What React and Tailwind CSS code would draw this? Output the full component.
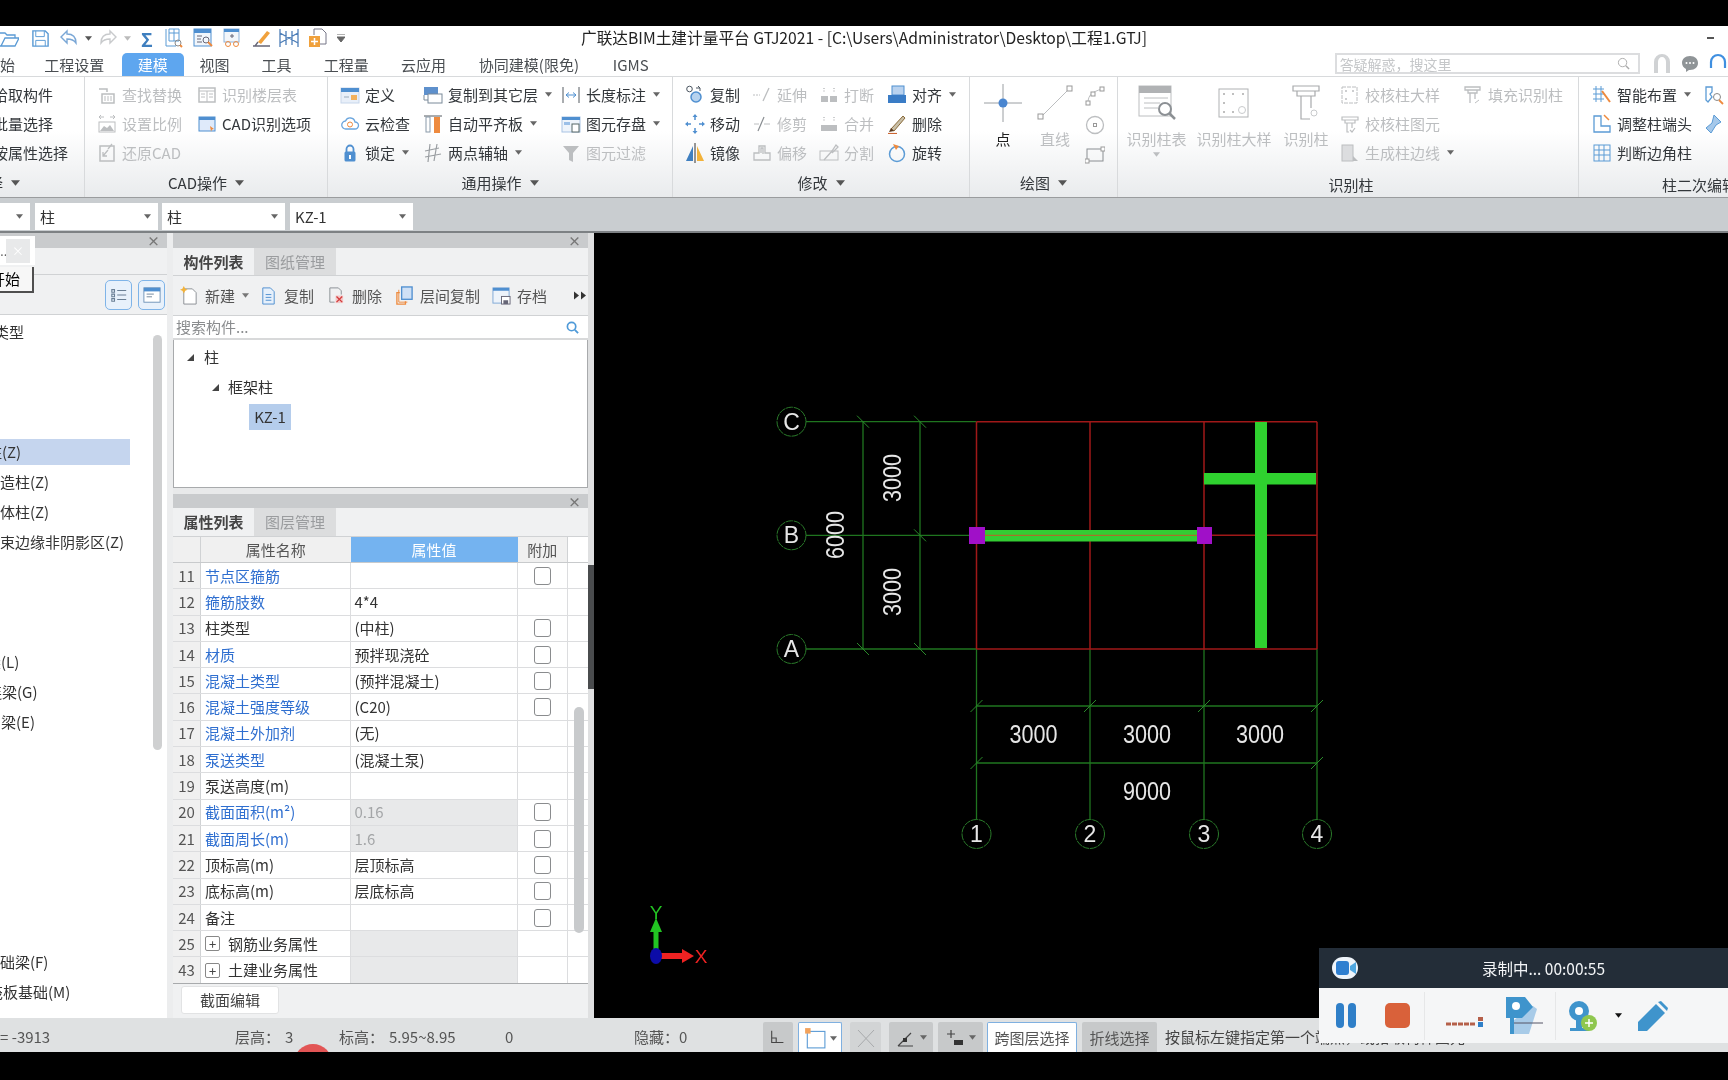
import React from "react";

const B = "#4f8fd0";
const G = "#bcbec0";
const O = "#ee8a3e";
const D = "#555b60";

const Svg = ({ children, className = "w-5 h-5", box = "0 0 20 20" }) => (
  <svg viewBox={box} fill="none" className={`${className} flex-none`}>
    {children}
  </svg>
);

const Caret = ({ color = "#666", className = "ml-[7px]" }) => (
  <svg viewBox="0 0 8 5" className={`w-[7px] h-[5px] flex-none ${className}`}>
    <path d="M0 0h8L4 5z" fill={color} />
  </svg>
);

// ribbon + toolbar icons, all on a 20x20 box
const icons = {
  find: <><path d="M2 4h6M8 4l2 0 0 3M5 9h12v9H5z" stroke={G} strokeWidth="1.5" /><path d="M8 11v5M11 11v5M14 11v5" stroke={G} /></>,
  table: <><rect x="2" y="3" width="16" height="14" stroke={G} strokeWidth="1.5" /><path d="M2 6h16M10 6v11M4 9h4M4 12h4M12 9h4M12 12h4" stroke={G} /></>,
  scale: <><path d="M2 3h5M13 3h5M4 1l-2 2 2 2M16 1l2 2-2 2" stroke={G} /><rect x="2" y="8" width="16" height="10" stroke={G} /><path d="M3 17l4-5 3 2 3-3 4 6z" fill={G} /></>,
  cadopt: <><rect x="2" y="3" width="16" height="14" fill="#dfeafa" stroke={B} /><rect x="2" y="3" width="16" height="3" fill={B} /><path d="M13 12l4 3-2 .5-1 2z" fill={O} /></>,
  restore: <><rect x="3" y="3" width="14" height="15" stroke={G} strokeWidth="1.5" /><path d="M6 13l5-6M6 9v4h4M15 1l-4 5" stroke={G} strokeWidth="1.3" /></>,
  def: <><rect x="1" y="3" width="18" height="15" fill="#e8eff9" stroke="#c7d6ea" /><rect x="1" y="3" width="18" height="4" fill={B} /><rect x="11" y="10" width="6" height="5" fill="#f3b15c" /><path d="M4 12h5" stroke="#9ab" /></>,
  cloud: <><path d="M6 15a4 4 0 0 1-.5-8 5 5 0 0 1 9.500 1 3.500 3.500 0 0 1 0 7z" stroke="#6aa5dd" strokeWidth="1.3" /><circle cx="10" cy="10.5" r="2.5" stroke={O} /></>,
  lock: <><path d="M6.5 9V6a3.5 3.5 0 0 1 7 0v3" stroke={B} strokeWidth="1.8" /><rect x="4.5" y="8.5" width="11" height="10" rx="1.5" fill={B} /><rect x="9" y="12" width="2" height="4" fill="#fff" /></>,
  copyLayer: <><rect x="1" y="2" width="14" height="8" fill="#5e90cc" /><rect x="5" y="9" width="14" height="9" fill="#fff" stroke="#7a8a99" /><path d="M1 10v5h4" stroke="#7a8a99" /></>,
  align: <><path d="M1 2h18" stroke={D} /><rect x="3" y="3" width="4" height="15" stroke="#8a9aa9" /><rect x="11" y="3" width="6" height="16" fill={O} /></>,
  axis: <><path d="M2 14l16-3M2 8l14-3M7 1L5 19M14 1l-3 17" stroke="#9a9ea2" strokeWidth="1.2" /></>,
  dim: <><path d="M2 2v16M18 2v16" stroke={D} /><path d="M5 10h10M5 10l3-2.5M5 10l3 2.5M15 10l-3-2.5M15 10l-3 2.5" stroke={B} /></>,
  store: <><rect x="1" y="3" width="18" height="15" fill="#eef4fb" stroke="#a9c3e3" /><rect x="1" y="3" width="18" height="3" fill={B} /><rect x="3" y="8" width="6" height="3" fill="#9cc0e8" /><rect x="11" y="10" width="7" height="8" fill="#fff" stroke="#566" /></>,
  filter: <path d="M2 3h16l-6 7v9l-4-2v-7z" fill={G} />,
  copy: <><circle cx="4.5" cy="4" r="2.8" stroke="#4a5560" /><circle cx="11" cy="12" r="5" fill="#b6d2ee" stroke={B} strokeWidth="1.5" /><path d="M11 3h4v3M15 3l-2-2" stroke="#4a5560" /></>,
  extend: <><path d="M1 10h7" stroke={G} strokeDasharray="2 1" /><path d="M11 16l6-13" stroke={G} strokeWidth="1.3" /></>,
  move: <><path d="M10 2v4M10 14v4M2 10h4M14 10h4" stroke={B} strokeWidth="1.5" /><path d="M10 0l2.5 3h-5zM10 20l2.5-3h-5zM0 10l3-2.5v5zM20 10l-3-2.5v5z" fill={B} /></>,
  trim: <><path d="M2 10h5M12 10h6" stroke={G} /><path d="M6 17L12 3" stroke="#8a8e92" strokeWidth="1.2" /></>,
  mirror: <><path d="M8 3L1 18h7z" fill="#3f7fc0" /><path d="M12 3l7 15h-7z" fill="#f2b23a" /><path d="M10 0v20" stroke="#333" /></>,
  offset: <path d="M7 10V3h6v7h5v7H2v-7zM9 10V5h2v6" stroke={G} strokeWidth="1.3" />,
  breakk: <><rect x="2" y="11" width="7" height="6" fill={G} /><rect x="11" y="11" width="7" height="6" fill={G} /><path d="M5 3v5M15 3v5" stroke={G} strokeDasharray="1 1.5" strokeWidth="1.5" /></>,
  merge: <><rect x="2" y="11" width="16" height="6" fill={G} /><path d="M5 3v5M15 3v5" stroke={G} strokeDasharray="1 1.5" strokeWidth="1.5" /></>,
  split: <><rect x="1" y="8" width="18" height="9" stroke={G} /><path d="M5 17l8-9 4-6 2 2-6 6" stroke={G} strokeWidth="1.3" /></>,
  alignTo: <><rect x="5" y="1" width="12" height="9" fill="#b9d2ef" stroke={B} /><rect x="1" y="10" width="18" height="8" fill="#3a7cc6" /></>,
  erase: <><path d="M4 15L16 2l2 2L7 17z" fill="#c8bfa8" stroke="#8a6a3a" /><path d="M2 18l2-4 3 3z" fill="#5a3a20" /><path d="M1 19.5h9" stroke="#c63" strokeWidth="1.2" /></>,
  rotate: <><circle cx="10" cy="11" r="7.5" stroke="#5b9bd5" strokeWidth="1.5" /><path d="M6 1l6 2-3 4z" fill={O} /></>,
  checkDetail: <><rect x="2" y="2" width="15" height="16" stroke={G} strokeDasharray="4 1" /><circle cx="6" cy="6" r="1" fill={G} /><circle cx="13" cy="6" r="1" fill={G} /><circle cx="6" cy="14" r="1" fill={G} /></>,
  checkCol: <><path d="M2 3h16v3H2zM5 6v3h10V6M7 9v9h2M12 9v5M15 14l-3 4-2-2" stroke={G} strokeWidth="1.2" /></>,
  edge: <><rect x="2" y="2" width="11" height="16" fill="#dcdddf" stroke={G} /><path d="M13 13l5 5h-5z" fill={G} /></>,
  fill: <><path d="M2 2h15v3H2zM5 5v3h9V5M7 8v10M12 8v6" stroke={G} strokeWidth="1.3" /><path d="M12 18l4-3" stroke={G} /></>,
  smart: <><path d="M1 4h11M1 9h11M1 14h11M4 1v16M9 1v16" stroke="#5b9bd5" /><path d="M10 6l8 11" stroke={O} strokeWidth="2" /></>,
  adjust: <><path d="M2 2h7v10h9v6H2z" stroke="#5b9bd5" strokeWidth="1.3" /><path d="M12 1l5 5" stroke={O} strokeWidth="1.5" /></>,
  corner: <><rect x="2" y="2" width="16" height="16" stroke="#5b9bd5" /><path d="M2 7h16M2 12h16M7 2v16M12 2v16" stroke="#5b9bd5" /></>,
  side1: <><path d="M2 2h6v5l-2 2 2 3-4 5-2-2z" stroke="#5b9bd5" strokeWidth="1.3" /><circle cx="13" cy="12" r="3.5" stroke="#888" /><path d="M15 15l4 4" stroke={O} strokeWidth="1.8" /></>,
  side2: <path d="M10 1l7 7-5 3-5 8-5-5 6-5z" fill="#a5c8ea" stroke="#5b9bd5" />,
  newf: <><path d="M4 3h9l4 4v12H4z" fill="#fff" stroke="#8a8f94" /><path d="M4 0l1.5 3L8 4 5.5 5 4 8 2.5 5 0 4l2.5-1z" fill="#f2b23a" /></>,
  copyf: <><path d="M4 2h8l4 4v13H4z" fill="#e6f0fb" stroke={B} /><path d="M7 9h6M7 12h6M7 15h6" stroke={B} /></>,
  del: <><path d="M3 2h9l3 3v4M3 2v15h5" stroke="#8a8f94" /><rect x="9" y="10" width="8" height="8" fill="#f3c7c7" /><path d="M10 11l6 6M16 11l-6 6" stroke="#d23b3b" strokeWidth="1.4" /></>,
  layer: <><rect x="7" y="1" width="11" height="13" fill="#cfe0f5" stroke={B} strokeWidth="1.4" /><path d="M5 7H2v12h9v-3" stroke={O} strokeWidth="1.4" /><path d="M4 4v13h9" stroke={O} /></>,
  archive: <><rect x="1" y="2" width="17" height="16" fill="#edf3fa" stroke="#7fa8d6" /><rect x="1" y="2" width="17" height="3" fill={B} /><rect x="10" y="11" width="9" height="8" fill="#fff" stroke="#667" /><rect x="12" y="15" width="5" height="4" fill="#667" /></>,
};

const Icon = ({ n, className }) => <Svg className={className}>{icons[n]}</Svg>;

const Btn = ({ icon, text, off, caret }) => (
  <div className="h-[29px] flex items-center">
    <Icon n={icon} />
    <span className={`ml-[5px] whitespace-nowrap ${off ? "text-[#bcbec0]" : "text-[#33373b]"}`}>{text}</span>
    {caret && <Caret />}
  </div>
);

const Group = ({ className, label, caret, children, labelClass = "" }) => (
  <div className={`flex-none flex flex-col border-r border-[#d8dadc] ${className}`}>
    <div className="h-[91px] pt-[3px] flex">{children}</div>
    <div className={`flex-1 flex items-center justify-center whitespace-nowrap text-[#33373b] ${labelClass}`}>
      {label}
      {caret && <Caret color="#555" className="ml-[8px] w-[9px] h-[6px]" />}
    </div>
  </div>
);

const Big = ({ className, text, off, caret, children }) => (
  <div className={`flex-none flex flex-col items-center ${className}`}>
    <div className="h-[49px] pb-[3px] w-full flex items-center justify-center">{children}</div>
    <span className={`whitespace-nowrap ${off ? "text-[#bcbec0]" : "text-[#222]"}`}>{text}</span>
    {caret && <Caret color="#bcbec0" className="mt-[3px]" />}
  </div>
);

const QuickAccess = () => (
  <div className="flex items-center h-full">
    <Svg className="w-5 h-5 -ml-[1px]"><path d="M0 5h6l2 2h8v3H6l-4 8H0zM2 18l4-8h14l-4 8z" stroke="#5b9bd5" strokeWidth="1.3" /></Svg>
    <Svg className="w-[19px] h-[19px] ml-[12px]"><path d="M2 2h13l3 3v13H2z" stroke="#5b9bd5" strokeWidth="1.5" /><path d="M5 2v6h9V2M5 18v-6h10v6" stroke="#5b9bd5" /></Svg>
    <Svg className="w-5 h-5 ml-[9px]"><path d="M8 3L2 9l6 6v-4c5 0 7 1 9 4 0-6-3-9-9-9z" stroke="#7aa7d6" strokeWidth="1.4" /></Svg>
    <Caret color="#555" className="ml-[6px]" />
    <Svg className="w-5 h-5 ml-[6px]"><path d="M12 3l6 6-6 6v-4c-5 0-7 1-9 4 0-6 3-9 9-9z" stroke="#c8cacc" strokeWidth="1.4" /></Svg>
    <Caret color="#bbb" className="ml-[6px]" />
    <span className="ml-[10px] w-[14px] text-[#3f7fbf] text-[19px] leading-none font-bold">Σ</span>
    <Svg className="w-5 h-5 ml-[8px]"><path d="M3 1v17h10M6 1h10v12H6zM6 5h10M11 1v12" stroke="#5b9bd5" /><circle cx="15" cy="15" r="3" stroke="#888" /><path d="M17 17l2 2" stroke={O} strokeWidth="2" /></Svg>
    <Svg className="w-5 h-5 ml-[10px]"><rect x="1" y="1" width="17" height="17" fill="#f1f6fc" stroke={B} /><rect x="1" y="1" width="17" height="4" fill={B} /><path d="M4 8h5M4 11h4M4 14h5" stroke="#667" /><circle cx="13" cy="12" r="3" stroke="#667" /><path d="M15 14l4 4" stroke={O} strokeWidth="2" /></Svg>
    <Svg className="w-5 h-5 ml-[9px]"><rect x="2" y="1" width="15" height="13" fill="#f3f6fa" stroke="#8fb3da" /><rect x="2" y="1" width="15" height="3" fill={B} /><path d="M8 8h4M10 6v4" stroke="#667" /><circle cx="6" cy="16" r="2.5" stroke={O} /><circle cx="14" cy="16" r="2.5" stroke={O} /></Svg>
    <Svg className="w-5 h-5 ml-[10px]"><path d="M6 14L15 3l3 2-9 11z" fill="#f0a13c" /><path d="M1 18h17M3 18l3-4" stroke="#667" strokeWidth="1.3" /></Svg>
    <Svg className="w-[22px] h-5 ml-[6px]" box="0 0 22 20"><path d="M2 1v18M20 1v18M2 5l9 5 9-5M2 15l9-5 9 5M8 3v14M14 3v14" stroke="#4f7fb8" strokeWidth="1.3" /></Svg>
    <Svg className="w-5 h-5 ml-[8px]"><path d="M6 1h8l4 4v11h-6M6 1v6" stroke="#778" /><rect x="1" y="8" width="11" height="11" fill="#f0a13c" /><path d="M6.5 10v7M3 13.5h7" stroke="#fff" strokeWidth="1.5" /></Svg>
    <svg viewBox="0 0 8 8" className="w-2 h-2 ml-[9px]"><path d="M0 0h8M0 3h8L4 8z" stroke="#666" fill="#666" /></svg>
  </div>
);

const TitleBar = () => (
  <div className="h-[27px] flex-none pb-[3px] bg-white grid grid-cols-[1fr_auto_1fr] items-center">
    <QuickAccess />
    <span className="text-[#222] text-[15.7px] whitespace-nowrap">广联达BIM土建计量平台 GTJ2021 - [C:\Users\Administrator\Desktop\工程1.GTJ]</span>
    <div className="flex justify-end pr-[14px]">
      <div className="w-[7px] h-[2px] bg-[#555]" />
    </div>
  </div>
);

const tabs = [
  { t: "始", c: "w-[27px] !justify-start" },
  { t: "工程设置", c: "w-[95px]" },
  { t: "建模", c: "w-[62px] bg-[#5ea6ef] text-white rounded-t-[5px]" },
  { t: "视图", c: "w-[62px]" },
  { t: "工具", c: "w-[62px]" },
  { t: "工程量", c: "w-[78px]" },
  { t: "云应用", c: "w-[77px]" },
  { t: "协同建模(限免)", c: "w-[134px]" },
  { t: "IGMS", c: "w-[70px]" },
];

const TabRow = () => (
  <div className="h-[24px] flex-none bg-white flex border-b border-[#d8dadc] text-[#4a4e52]">
    {tabs.map((t) => (
      <div key={t.t} className={`flex items-center justify-center whitespace-nowrap ${t.c}`}>{t.t}</div>
    ))}
    <div className="ml-[669px] w-[306px] h-[21px] border-2 border-[#dcdddf] flex items-center px-[3px] text-[#c5c7c9] text-[14px]">
      答疑解惑，搜这里
      <svg viewBox="0 0 14 14" className="w-[13px] h-[13px] ml-auto mr-[5px]"><circle cx="6" cy="6" r="4.5" stroke="#aaa" fill="none" /><path d="M9.5 9.5L13 13" stroke="#aaa" strokeWidth="1.5" /></svg>
    </div>
    <Svg className="w-5 h-5 ml-[12px]"><path d="M2 20V9a8 8 0 0 1 16 0v11h-4V9a4 5 0 0 0-8 0v11z" fill="#d0d2d4" /></Svg>
    <Svg className="w-5 h-5 ml-[8px]"><path d="M10 3c5 0 8 3 8 7s-3 7-8 7l-1 0-3 2v-3c-2-1-4-3-4-6 0-4 3-7 8-7z" fill="#8f9497" /><circle cx="6.5" cy="10" r="1" fill="#fff" /><circle cx="10" cy="10" r="1" fill="#fff" /><circle cx="13.5" cy="10" r="1" fill="#fff" /></Svg>
    <Svg className="w-5 h-5 ml-[8px]"><path d="M3 12V9a7 7 0 0 1 14 0v3M3 10v5M17 10v5" stroke="#3f8fe0" strokeWidth="2.2" /></Svg>
  </div>
);

const Ribbon = () => (
  <div className="h-[121px] flex-none flex overflow-hidden bg-gradient-to-b from-white from-45% to-[#e9ebed] border-b border-[#9a9c9e]">
    <Group className="w-[85px]" label="择" caret labelClass="!justify-start -ml-[12px]">
      <div className="flex flex-col -ml-[7px] text-[#33373b]">
        <div className="h-[29px] flex items-center whitespace-nowrap">拾取构件</div>
        <div className="h-[29px] flex items-center whitespace-nowrap">批量选择</div>
        <div className="h-[29px] flex items-center whitespace-nowrap">按属性选择</div>
      </div>
    </Group>
    <Group className="w-[243px]" label="CAD操作" caret>
      <div className="flex flex-col w-[100px] ml-[12px]">
        <Btn icon="find" text="查找替换" off />
        <Btn icon="scale" text="设置比例" off />
        <Btn icon="restore" text="还原CAD" off />
      </div>
      <div className="flex flex-col">
        <Btn icon="table" text="识别楼层表" off />
        <Btn icon="cadopt" text="CAD识别选项" />
      </div>
    </Group>
    <Group className="w-[345px]" label="通用操作" caret>
      <div className="flex flex-col w-[83px] ml-[12px]">
        <Btn icon="def" text="定义" />
        <Btn icon="cloud" text="云检查" />
        <Btn icon="lock" text="锁定" caret />
      </div>
      <div className="flex flex-col w-[138px]">
        <Btn icon="copyLayer" text="复制到其它层" caret />
        <Btn icon="align" text="自动平齐板" caret />
        <Btn icon="axis" text="两点辅轴" caret />
      </div>
      <div className="flex flex-col">
        <Btn icon="dim" text="长度标注" caret />
        <Btn icon="store" text="图元存盘" caret />
        <Btn icon="filter" text="图元过滤" off />
      </div>
    </Group>
    <Group className="w-[297px]" label="修改" caret>
      <div className="flex flex-col w-[67px] ml-[12px]">
        <Btn icon="copy" text="复制" />
        <Btn icon="move" text="移动" />
        <Btn icon="mirror" text="镜像" />
      </div>
      <div className="flex flex-col w-[67px]">
        <Btn icon="extend" text="延伸" off />
        <Btn icon="trim" text="修剪" off />
        <Btn icon="offset" text="偏移" off />
      </div>
      <div className="flex flex-col w-[68px]">
        <Btn icon="breakk" text="打断" off />
        <Btn icon="merge" text="合并" off />
        <Btn icon="split" text="分割" off />
      </div>
      <div className="flex flex-col">
        <Btn icon="alignTo" text="对齐" caret />
        <Btn icon="erase" text="删除" />
        <Btn icon="rotate" text="旋转" />
      </div>
    </Group>
    <Group className="w-[148px]" label="绘图" caret>
      <Big className="w-[66px]" text="点">
        <Svg className="w-[38px] h-[38px]" box="0 0 38 38">
          <path d="M0 19h38M19 0v38" stroke="#9a9ea2" />
          <circle cx="19" cy="19" r="4.5" fill="#4a86d0" />
        </Svg>
      </Big>
      <Big className="w-[38px]" text="直线" off>
        <Svg className="w-[36px] h-[36px]" box="0 0 36 36">
          <path d="M4 32L32 4" stroke="#bcbec0" />
          <rect x="1" y="29" width="5" height="5" fill="#fff" stroke="#999" />
          <rect x="30" y="1" width="5" height="5" fill="#fff" stroke="#999" />
        </Svg>
      </Big>
      <div className="flex flex-col items-center gap-[9px] pt-[6px] ml-[11px]">
        <Svg><path d="M3 17C3 9 7 6 17 3" stroke={G} /><rect x="1" y="15" width="4" height="4" fill="#fff" stroke="#999" /><rect x="6" y="6" width="4" height="4" fill="#fff" stroke="#999" /><rect x="15" y="1" width="4" height="4" fill="#fff" stroke="#999" /></Svg>
        <Svg><circle cx="10" cy="10" r="8.5" stroke={G} strokeWidth="1.3" /><rect x="8.5" y="8.5" width="3" height="3" stroke="#999" /></Svg>
        <Svg><rect x="2" y="5" width="16" height="12" stroke="#8a8e92" /><rect x="0" y="15" width="4" height="4" fill="#fff" stroke="#999" /><rect x="16" y="3" width="4" height="4" fill="#fff" stroke="#999" /></Svg>
      </div>
    </Group>
    <Group className="w-[461px]" label="识别柱" labelClass="pt-[5px] pl-[6px]">
      <Big className="w-[77px]" text="识别柱表" off caret>
        <Svg className="w-[38px] h-[36px]" box="0 0 38 36">
          <rect x="1" y="1" width="32" height="30" fill="#fff" stroke="#bcbec0" />
          <rect x="1" y="1" width="32" height="7" fill="#b0b2b4" />
          <path d="M6 13h24M6 18h16M6 23h14" stroke="#bcbec0" />
          <circle cx="27" cy="24" r="6" stroke="#8c9094" strokeWidth="2" />
          <path d="M31 28l6 6" stroke="#8c9094" strokeWidth="2.5" />
        </Svg>
      </Big>
      <Big className="w-[78px]" text="识别柱大样" off>
        <Svg className="w-[32px] h-[30px]" box="0 0 32 30">
          <rect x="1" y="1" width="29" height="28" stroke="#b0b2b4" />
          <circle cx="6" cy="6" r="1" fill="#aaa" /><circle cx="15" cy="6" r="1" fill="#aaa" /><circle cx="25" cy="6" r="1" fill="#aaa" /><circle cx="6" cy="15" r="1" fill="#aaa" /><circle cx="6" cy="24" r="1" fill="#aaa" /><circle cx="15" cy="24" r="1" fill="#aaa" />
          <circle cx="24" cy="22" r="3.5" stroke="#c8cacc" />
        </Svg>
      </Big>
      <Big className="w-[66px]" text="识别柱" off>
        <Svg className="w-[30px] h-[36px]" box="0 0 30 36">
          <path d="M2 1h26v5H2zM6 6v5h18V6M10 11v23h9M20 11v12" stroke="#a8aaac" strokeWidth="1.2" />
          <circle cx="23" cy="28" r="3" stroke="#c8cacc" />
        </Svg>
      </Big>
      <div className="flex flex-col w-[123px] ml-[1px]">
        <Btn icon="checkDetail" text="校核柱大样" off />
        <Btn icon="checkCol" text="校核柱图元" off />
        <Btn icon="edge" text="生成柱边线" off caret />
      </div>
      <div className="flex flex-col">
        <Btn icon="fill" text="填充识别柱" off />
      </div>
    </Group>
    <Group className="flex-1 !border-r-0" label="柱二次编辑" labelClass="pt-[5px] !justify-start pl-[83px]">
      <div className="flex flex-col w-[112px] ml-[13px]">
        <Btn icon="smart" text="智能布置" caret />
        <Btn icon="adjust" text="调整柱端头" />
        <Btn icon="corner" text="判断边角柱" />
      </div>
      <div className="flex flex-col">
        <div className="h-[29px] flex items-center"><Icon n="side1" /></div>
        <div className="h-[29px] flex items-center"><Icon n="side2" /></div>
      </div>
    </Group>
  </div>
);

const Combo = ({ text, className }) => (
  <div className={`h-[27px] bg-white flex items-center justify-between pl-[5px] pr-[7px] text-[#333] ${className}`}>
    <span>{text}</span>
    <Caret color="#666" className="" />
  </div>
);

const ComboRow = () => (
  <div className="h-[35px] flex-none pt-[5px] bg-[#c9cdd0] flex items-start border-b-2 border-[#7d8184]">
    <Combo text="" className="w-[30px]" />
    <Combo text="柱" className="w-[123px] ml-[5px]" />
    <Combo text="柱" className="w-[123px] ml-[4px]" />
    <Combo text="KZ-1" className="w-[123px] ml-[5px]" />
  </div>
);

const PanelHeader = ({ className = "h-[15px]" }) => (
  <div className={`flex-none bg-[#c9cbcd] flex items-center justify-end pr-[7px] text-[#777] text-[13px] font-bold leading-none ${className}`}>×</div>
);

const PanelTabs = ({ a, b, className = "h-[28px]" }) => (
  <div className={`flex-none flex border-b border-[#d0d2d4] bg-[#f0f1f2] ${className}`}>
    <div className="w-[81px] flex items-center justify-center font-bold text-[#444]">{a}</div>
    <div className="w-[82px] flex items-center justify-center bg-[#dcddde] text-[#9a9c9e]">{b}</div>
  </div>
);

const leftRows = [
  { t: "类型", c: "-ml-[6px]" },
  {}, {}, {},
  { t: "柱(Z)", c: "-ml-[13px]", sel: true },
  { t: "造柱(Z)" },
  { t: "体柱(Z)" },
  { t: "束边缘非阴影区(Z)" },
  {}, {}, {},
  { t: "梁(L)", c: "-ml-[14px]" },
  { t: "连梁(G)", c: "-ml-[13px]" },
  { t: "圈梁(E)", c: "-ml-[14px]" },
  {}, {}, {}, {}, {}, {}, {},
  { t: "基础梁(F)", c: "-ml-[15px]" },
  { t: "筏板基础(M)", c: "-ml-[12px]" },
];

const LeftPanel = () => (
  <div className="w-[167px] flex-none flex flex-col relative bg-white">
    <PanelHeader />
    <div className="h-[27px] flex-none bg-[#f0f1f2] border-b border-[#d0d2d4]" />
    <div className="h-[40px] flex-none bg-[#f0f1f2] border-b border-[#d0d2d4] flex items-center justify-end gap-[6px] pr-[2px]">
      <div className="w-[27px] h-[30px] rounded-[5px] border border-[#7fb4e8] bg-[#e8f1fb] flex items-center justify-center">
        <Svg className="w-[18px] h-[18px]"><path d="M2 4h3v3H2zM2 9h3v3H2zM2 14h3v3H2zM8 5h10M8 10h10M8 15h10" stroke="#6a7f95" strokeWidth="1.2" /></Svg>
      </div>
      <div className="w-[27px] h-[30px] rounded-[5px] border border-[#7fb4e8] bg-[#e8f1fb] flex items-center justify-center">
        <Svg className="w-[18px] h-[18px]"><rect x="1" y="2" width="18" height="16" fill="#fff" stroke="#6a8fb5" /><rect x="1" y="2" width="18" height="4" fill="#4f8fd0" /><path d="M4 9h8M4 12h6" stroke="#6a7f95" /></Svg>
      </div>
    </div>
    <div className="flex-1 pt-[2px] overflow-hidden text-[#333]">
      {leftRows.map((r, i) => (
        <div key={i} className="h-[30px] flex items-center">
          <div className={`h-[26px] w-[130px] flex items-center whitespace-nowrap overflow-hidden ${r.sel ? "bg-[#c5d5ee]" : ""}`}>
            <span className={r.c}>{r.t}</span>
          </div>
        </div>
      ))}
    </div>
    <div className="absolute left-[153px] top-[102px] w-[9px] h-[415px] rounded-full bg-[#cfd0d1]" />
    <div className="absolute left-0 top-[3px] w-[35px] h-[29px] bg-white flex items-center text-[#555] leading-none">
      <span className="w-[9px] text-[12px] -ml-[3px]">...</span>
      <div className="w-[24px] h-[24px] bg-[#e8e9ea] flex items-center justify-center text-white text-[12px]">×</div>
    </div>
    <div className="absolute left-0 top-[34px] w-[34px] h-[26px] bg-[#f7f7f7] border-r-2 border-b-2 border-[#4f4f4f] flex items-center text-black whitespace-nowrap overflow-hidden">
      <span className="-ml-[10px]">开始</span>
    </div>
  </div>
);

const ToolItem = ({ icon, text, caret, className }) => (
  <div className={`flex items-center ${className}`}>
    <Icon n={icon} className="w-[19px] h-[19px]" />
    <span className="ml-[6px] text-[#555] whitespace-nowrap">{text}</span>
    {caret && <Caret color="#777" />}
  </div>
);

const TreeArrow = () => (
  <svg viewBox="0 0 7 7" className="w-[7px] h-[7px] flex-none"><path d="M7 0v7H0z" fill="#444" /></svg>
);

const ComponentList = () => (
  <>
    <PanelHeader />
    <PanelTabs a="构件列表" b="图纸管理" />
    <div className="h-[40px] flex-none flex items-center pl-[7px] bg-[#f0f1f2] border-b border-[#d0d2d4]">
      <ToolItem icon="newf" text="新建" caret />
      <ToolItem icon="copyf" text="复制" className="ml-[10px]" />
      <ToolItem icon="del" text="删除" className="ml-[13px]" />
      <ToolItem icon="layer" text="层间复制" className="ml-[13px]" />
      <ToolItem icon="archive" text="存档" className="ml-[12px]" />
      <svg viewBox="0 0 12 8" className="w-[12px] h-[9px] ml-[27px]"><path d="M0 0l5 4-5 4zM7 0l5 4-5 4z" fill="#333" /></svg>
    </div>
    <div className="h-[24px] flex-none bg-white border-b-2 border-[#d8d9da] flex items-center pl-[3px] pr-[9px] text-[#8a8c8e]">
      搜索构件...
      <svg viewBox="0 0 14 14" className="w-[13px] h-[13px] ml-auto"><circle cx="6" cy="6" r="4.5" stroke="#4f9ad8" strokeWidth="1.8" fill="none" /><path d="M9.5 9.5L13 13" stroke="#4f9ad8" strokeWidth="2" /></svg>
    </div>
    <div className="h-[148px] flex-none bg-white border border-t-0 border-[#a8aaac] pt-[2px] text-[#333]">
      <div className="h-[30px] flex items-center pl-[13px]"><TreeArrow /><span className="ml-[10px]">柱</span></div>
      <div className="h-[30px] flex items-center pl-[38px]"><TreeArrow /><span className="ml-[9px]">框架柱</span></div>
      <div className="h-[30px] flex items-center pl-[75px]"><span className="bg-[#b5cdec] w-[42px] h-[26px] flex items-center justify-center">KZ-1</span></div>
    </div>
  </>
);

const props = [
  { i: 11, n: "节点区箍筋", blue: 1, chk: 1 },
  { i: 12, n: "箍筋肢数", blue: 1, v: "4*4" },
  { i: 13, n: "柱类型", v: "(中柱)", chk: 1 },
  { i: 14, n: "材质", blue: 1, v: "预拌现浇砼", chk: 1 },
  { i: 15, n: "混凝土类型", blue: 1, v: "(预拌混凝土)", chk: 1 },
  { i: 16, n: "混凝土强度等级", blue: 1, v: "(C20)", chk: 1 },
  { i: 17, n: "混凝土外加剂", blue: 1, v: "(无)" },
  { i: 18, n: "泵送类型", blue: 1, v: "(混凝土泵)" },
  { i: 19, n: "泵送高度(m)" },
  { i: 20, n: "截面面积(m²)", blue: 1, v: "0.16", off: 1, chk: 1 },
  { i: 21, n: "截面周长(m)", blue: 1, v: "1.6", off: 1, chk: 1 },
  { i: 22, n: "顶标高(m)", v: "层顶标高", chk: 1 },
  { i: 23, n: "底标高(m)", v: "层底标高", chk: 1 },
  { i: 24, n: "备注", chk: 1 },
  { i: 25, n: "钢筋业务属性", plus: 1, off: 1 },
  { i: 43, n: "土建业务属性", plus: 1, off: 1 },
];

const PropRow = ({ r }) => (
  <div className="h-[26.3px] flex border-b border-[#dcdddf] bg-white">
    <div className="w-[28px] flex-none bg-[#f0f0f0] border-r border-[#d0d2d4] flex items-center justify-center text-[#555]">{r.i}</div>
    <div className={`w-[149.5px] flex-none flex items-center pl-[4px] whitespace-nowrap border-r border-[#dcdddf] ${r.blue ? "text-[#2f6fd0]" : "text-[#333]"}`}>
      {r.plus && (
        <span className="w-[15px] h-[15px] mr-[8px] border border-[#888] rounded-[2px] flex items-center justify-center text-[#444] text-[13px] leading-none">+</span>
      )}
      {r.n}
    </div>
    <div className={`w-[167px] flex-none flex items-center pl-[4px] whitespace-nowrap border-r border-[#dcdddf] ${r.off ? "bg-[#e8e9ea] text-[#a4a6a8]" : "text-[#333]"}`}>{r.v}</div>
    <div className="w-[50.5px] flex-none flex items-center justify-center border-r border-[#dcdddf]">
      {r.chk && <div className="w-[17px] h-[18px] rounded-[3px] border border-[#8a8c8e] bg-white" />}
    </div>
  </div>
);

const PropList = () => (
  <>
    <PanelHeader className="h-[14px]" />
    <PanelTabs a="属性列表" b="图层管理" className="h-[29px]" />
    <div className="relative h-[447px] flex-none bg-white border-b border-[#a8aaac] overflow-hidden">
      <div className="h-[26px] flex border-b border-[#c8cacc]">
        <div className="w-[28px] flex-none bg-[#f0f0f0] border-r border-[#d0d2d4]" />
        <div className="w-[149.5px] flex-none bg-[#f0f0f0] flex items-center justify-center text-[#555]">属性名称</div>
        <div className="w-[167px] flex-none bg-[#74b3f0] flex items-center justify-center text-white">属性值</div>
        <div className="w-[50.5px] flex-none bg-[#f0f0f0] border-r border-[#d0d2d4] flex items-center justify-center text-[#555]">附加</div>
      </div>
      {props.map((r) => (
        <PropRow key={r.i} r={r} />
      ))}
      <div className="absolute left-[401px] top-[170px] w-[10px] h-[226px] rounded-full bg-[#c8cacc]" />
    </div>
    <div className="flex-1 bg-[#f0f1f2] pl-[8px] pt-[2px]">
      <div className="w-[98px] h-[28px] bg-white rounded-[3px] border border-[#e2e3e4] flex items-center justify-center text-[#444]">截面编辑</div>
    </div>
  </>
);

const Tick = ({ x, y, back }) => (
  <path d={back ? `M${x - 6} ${y - 6}L${x + 6} ${y + 6}` : `M${x - 6} ${y + 6}L${x + 6} ${y - 6}`} stroke="#2a8a2a" />
);

const Bubble = ({ x, y, t }) => (
  <>
    <circle cx={x} cy={y} r="14.5" fill="#000" stroke="#2a7a2a" strokeDasharray="7 0.8" />
    <text x={x} y={y + 8} textAnchor="middle" fill="#e6e6e6" fontSize="23" fontFamily="Liberation Sans, sans-serif">{t}</text>
  </>
);

const Dim = ({ x, y, t, rot }) => (
  <text
    x={x}
    y={y}
    textAnchor="middle"
    dominantBaseline="central"
    fill="#e6e6e6"
    fontSize="25"
    fontFamily="Liberation Sans, sans-serif"
    textLength="48"
    lengthAdjust="spacingAndGlyphs"
    transform={rot ? `rotate(-90 ${x} ${y})` : undefined}
  >
    {t}
  </text>
);

const CadCanvas = () => {
  const xs = [976.5, 1090, 1204, 1317];
  const ys = [421.7, 535.3, 649];
  const green = "#1f751f";
  const red = "#a01818";
  return (
    <div className="flex-1 bg-black overflow-hidden">
      <svg viewBox="594 233 1134 785" className="block w-[1134px] h-[785px]">
        {ys.map((y) => (
          <path key={y} d={`M806 ${y}H976.5`} stroke={green} strokeWidth="1.3" />
        ))}
        {xs.map((x) => (
          <path key={x} d={`M${x} 649V820`} stroke={green} strokeWidth="1.3" />
        ))}
        <path d="M863 421.7V649M920 421.7V649M976.5 706H1317M976.5 763H1317" stroke={green} strokeWidth="1.3" />
        {ys.map((y) => [863, 920].map((x) => (y === ys[1] && x === 863 ? null : <Tick key={`${x}${y}`} x={x} y={y} back />)))}
        {xs.map((x) => <Tick key={x} x={x} y={706} />)}
        <Tick x={976.5} y={763} />
        <Tick x={1317} y={763} />
        {ys.map((y) => (
          <path key={y} d={`M976.5 ${y}H1317`} stroke={red} strokeWidth="1.5" />
        ))}
        {xs.map((x) => (
          <path key={x} d={`M${x} 421.7V649`} stroke={red} strokeWidth="1.5" />
        ))}
        <rect x="984" y="530" width="214" height="11.5" fill="#33cc33" />
        <rect x="1255" y="422" width="12" height="226" fill="#2fd12f" />
        <rect x="1204" y="473" width="112" height="11.5" fill="#2fd12f" />
        <path d="M984 535.3H1198" stroke="#a8702a" strokeWidth="1.2" />
        <rect x="969" y="527" width="16" height="17" fill="#a010c8" />
        <rect x="1197" y="527" width="15" height="17" fill="#a010c8" />
        <Bubble x={791.5} y={421.7} t="C" />
        <Bubble x={791.5} y={535.3} t="B" />
        <Bubble x={791.5} y={649} t="A" />
        {xs.map((x, i) => <Bubble key={x} x={x} y={834} t={i + 1} />)}
        <Dim x={892} y={478} t="3000" rot />
        <Dim x={892} y={592} t="3000" rot />
        <Dim x={835} y={535} t="6000" rot />
        <Dim x={1033.5} y={734} t="3000" />
        <Dim x={1147} y={734} t="3000" />
        <Dim x={1260} y={734} t="3000" />
        <Dim x={1147} y={791} t="9000" />
        <path d="M656 956V928" stroke="#22c422" strokeWidth="5" />
        <path d="M656 918l-6 14h12z" fill="#22c422" />
        <text x="656" y="919" textAnchor="middle" fill="#22c422" fontSize="19" fontFamily="Liberation Sans, sans-serif">Y</text>
        <path d="M660 956h24" stroke="#ee2222" strokeWidth="6" />
        <path d="M694 956l-12-7v14z" fill="#ee2222" />
        <ellipse cx="656" cy="956" rx="6" ry="8" fill="#0c0ca8" />
        <text x="701" y="963" textAnchor="middle" fill="#ee2222" fontSize="19" fontFamily="Liberation Sans, sans-serif">X</text>
      </svg>
    </div>
  );
};

const StatusBtn = ({ className, children }) => (
  <div className={`h-[30px] pt-[1px] flex-none flex items-center justify-center whitespace-nowrap rounded-t-[2px] ${className}`}>{children}</div>
);

const StatusBar = () => (
  <div className="relative h-[34px] flex-none bg-[#dfe1e2] flex items-end overflow-hidden text-[#555]">
    <div className="h-[34px] pt-[3px] flex items-center whitespace-nowrap flex-none">
      <span className="w-[235px]">= -3913</span>
      <span className="w-[50px]">层高：</span>
      <span className="w-[54px]">3</span>
      <span className="w-[50px]">标高：</span>
      <span className="w-[116px]">5.95~8.95</span>
      <span className="w-[129px]">0</span>
      <span className="w-[45px]">隐藏：</span>
      <span className="w-[84px]">0</span>
    </div>
    <StatusBtn className="w-[30px] bg-[#c7c9ca]">
      <Svg className="w-[18px] h-[18px]"><path d="M3 2v13h13M3 10h5v5" stroke="#444" strokeWidth="1.2" /></Svg>
    </StatusBtn>
    <StatusBtn className="w-[44px] ml-[5px] bg-white border border-[#7fb0e0] border-b-0">
      <Svg className="w-[22px] h-[22px]"><rect x="3" y="4" width="16" height="15" stroke="#5b9bd5" /><rect x="1" y="1" width="5" height="5" fill="#f2a25c" /></Svg>
      <Caret color="#666" className="ml-[4px]" />
    </StatusBtn>
    <StatusBtn className="w-[31px] ml-[8px] bg-[#d2d4d5]">
      <Svg className="w-5 h-5"><path d="M2 2l16 17M18 2L2 19" stroke="#a8aaac" /></Svg>
    </StatusBtn>
    <StatusBtn className="w-[44px] ml-[8px] bg-[#c7c9ca]">
      <Svg className="w-[20px] h-[20px]"><path d="M2 18h15M2 18L15 5" stroke="#444" strokeWidth="1.2" /><rect x="7" y="10" width="4" height="4" fill="#333" /></Svg>
      <Caret color="#666" className="ml-[4px]" />
    </StatusBtn>
    <StatusBtn className="w-[45px] ml-[5px] bg-[#c7c9ca]">
      <Svg className="w-[20px] h-[20px]"><path d="M2 6h8M6 2v8" stroke="#444" strokeWidth="1.2" /><rect x="9" y="12" width="9" height="5" fill="#333" /></Svg>
      <Caret color="#666" className="ml-[4px]" />
    </StatusBtn>
    <StatusBtn className="w-[90px] ml-[4px] bg-white border border-[#7fb0e0] border-b-0">跨图层选择</StatusBtn>
    <StatusBtn className="w-[75px] ml-[5px] bg-[#c7c9ca]">折线选择</StatusBtn>
    <div className="h-[34px] pt-[3px] ml-[8px] flex items-center whitespace-nowrap text-[#444]">按鼠标左键指定第一个端点，或拾取构件图元</div>
    <div className="absolute left-[294px] top-[26px] w-[38px] h-[38px] rounded-full bg-[#e25555]" />
  </div>
);

const Recorder = () => (
  <div className="absolute left-[1319px] top-[948px] w-[409px] h-[95px] flex flex-col">
    <div className="h-[40px] bg-[#232d38] flex items-center">
      <Svg className="w-[28px] h-[28px] ml-[12px]" box="0 0 28 28">
        <rect x="1" y="3" width="26" height="22" rx="11" fill="#eef4fa" />
        <rect x="5" y="7" width="13" height="14" rx="3" fill="#2f7fd0" />
        <path d="M19 12l6-4v12l-6-4z" fill="#4fa7e0" />
      </Svg>
      <span className="flex-1 text-center text-[#f2f4f6] text-[15.5px] whitespace-nowrap">录制中... 00:00:55</span>
    </div>
    <div className="flex-1 bg-[#f5f6f7] flex items-center">
      <div className="flex gap-[4px] ml-[17px]">
        <div className="w-[8px] h-[25px] rounded-full bg-[#2f7fc8]" />
        <div className="w-[8px] h-[25px] rounded-full bg-[#2f7fc8]" />
      </div>
      <div className="w-[25px] h-[25px] ml-[29px] rounded-[5px] bg-[#d9613a]" />
      <div className="w-px h-[48px] ml-[14px] bg-[#e6e7e8]" />
      <Svg className="w-[38px] h-[14px] ml-[21px] mt-[14px]" box="0 0 38 14">
        <path d="M0 8h30" stroke="#b5604a" strokeWidth="3" strokeDasharray="5 1" />
        <rect x="32" y="1" width="5" height="4" fill="#b5604a" />
        <rect x="32" y="6" width="5" height="5" fill="#2f7fc8" />
      </Svg>
      <Svg className="w-[40px] h-[40px] ml-[21px]" box="0 0 40 40">
        <path d="M9 38V24L28 10l4 3-8 25z" fill="#a8cbe8" />
        <path d="M1 1h19l8 10-11 11H9v16H5V22H1z" fill="#3f94cc" />
        <circle cx="11" cy="10" r="4" fill="#fff" />
        <path d="M9 27h29" stroke="#556" />
      </Svg>
      <div className="w-px h-[48px] ml-[10px] bg-[#e6e7e8]" />
      <Svg className="w-[32px] h-[32px] ml-[10px]" box="0 0 32 32">
        <circle cx="13" cy="11" r="10" fill="#3f94cc" />
        <circle cx="13" cy="11" r="4" fill="#fff" />
        <path d="M4 28h19v3H4zM10 20h6v8h-6z" fill="#3f94cc" />
        <circle cx="23" cy="23" r="8" fill="#8fc74f" />
        <path d="M19 23h8M23 19v8" stroke="#fff" strokeWidth="1.5" />
      </Svg>
      <Caret color="#111" className="ml-[17px]" />
      <Svg className="w-[30px] h-[30px] ml-[16px]" box="0 0 30 30">
        <path d="M0 30V21L18 3l9 9L9 30z" fill="#3f94cc" />
        <path d="M20 1l3-1 7 7-1 3z" fill="#3f94cc" />
      </Svg>
    </div>
  </div>
);

export default function App() {
  return (
    <div className="relative w-[1728px] h-[1080px] bg-black overflow-hidden flex flex-col text-[15px] leading-[20px] font-['Noto_Sans_CJK_SC','Noto_Sans',sans-serif] blur-[0.35px]">
      <div className="h-[26px] flex-none" />
      <TitleBar />
      <TabRow />
      <Ribbon />
      <ComboRow />
      <div className="h-[785px] flex-none flex">
        <LeftPanel />
        <div className="w-[6px] flex-none bg-[#ecedee]" />
        <div className="w-[415px] flex-none flex flex-col bg-[#f0f1f2]">
          <ComponentList />
          <div className="h-[6px] flex-none bg-[#e8e9ea]" />
          <PropList />
        </div>
        <div className="w-[6px] flex-none bg-[#dfe0e1] flex flex-col">
          <div className="h-[332px]" />
          <div className="h-[124px] bg-[#4a4c4e]" />
        </div>
        <CadCanvas />
      </div>
      <StatusBar />
      <Recorder />
    </div>
  );
}
